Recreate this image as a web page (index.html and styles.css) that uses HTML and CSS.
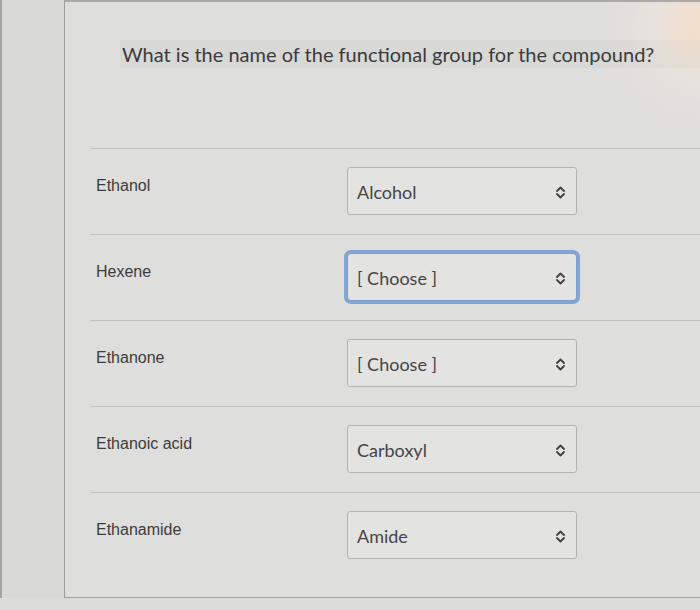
FILE: index.html
```html
<!DOCTYPE html>
<html lang="en">
<head>
<meta charset="utf-8">
<title>Functional groups</title>
<link rel="stylesheet" href="styles.css">
</head>
<body>
<div class="screen">
  <div class="gutter"></div>
  <main class="panel">
    <h1 class="question">What is the name of the functional group for the compound?</h1>
    <div class="answers">
      <div class="row">
        <div class="label">Ethanol</div>
        <div class="select"><span>Alcohol</span><svg class="chev" viewBox="0 0 9 13" width="9" height="13"><polyline points="1,5 4.5,1.5 8,5"/><polyline points="1,8 4.5,11.5 8,8"/></svg></div>
      </div>
      <div class="row">
        <div class="label">Hexene</div>
        <div class="select focused"><span>[ Choose ]</span><svg class="chev" viewBox="0 0 9 13" width="9" height="13"><polyline points="1,5 4.5,1.5 8,5"/><polyline points="1,8 4.5,11.5 8,8"/></svg></div>
      </div>
      <div class="row">
        <div class="label">Ethanone</div>
        <div class="select"><span>[ Choose ]</span><svg class="chev" viewBox="0 0 9 13" width="9" height="13"><polyline points="1,5 4.5,1.5 8,5"/><polyline points="1,8 4.5,11.5 8,8"/></svg></div>
      </div>
      <div class="row">
        <div class="label">Ethanoic acid</div>
        <div class="select"><span>Carboxyl</span><svg class="chev" viewBox="0 0 9 13" width="9" height="13"><polyline points="1,5 4.5,1.5 8,5"/><polyline points="1,8 4.5,11.5 8,8"/></svg></div>
      </div>
      <div class="row">
        <div class="label">Ethanamide</div>
        <div class="select"><span>Amide</span><svg class="chev" viewBox="0 0 9 13" width="9" height="13"><polyline points="1,5 4.5,1.5 8,5"/><polyline points="1,8 4.5,11.5 8,8"/></svg></div>
      </div>
    </div>
  </main>
</div>
</body>
</html>
```

FILE: styles.css
```css
html, body {
  margin: 0;
  padding: 0;
}
body {
  width: 700px;
  height: 610px;
  overflow: hidden;
  background: #dcdcda;
  font-family: Lato, "Open Sans", sans-serif;
}
.screen {
  display: flex;
  height: 598px;
}
.gutter {
  width: 62px;
  flex: none;
  border-left: 2px solid #a4a4a4;
  background: #d9d9d7;
}
.panel {
  flex: 1;
  border-left: 1px solid #9c9c9c;
  border-top: 2px solid #a9a9a9;
  border-bottom: 1px solid #9f9f9f;
  background:
    radial-gradient(circle at 640px 25px, rgba(255, 222, 190, 0.7) 0, rgba(255, 236, 220, 0.3) 50px, rgba(255, 255, 255, 0) 110px),
    #dededc;
}
.question {
  margin: 38px 0 0 55px;
  padding: 1px 0 1px 2px;
  height: 26px;
  background: rgba(0, 0, 0, 0.025);
  font-weight: 400;
  font-size: 20px;
  line-height: 26px;
  color: #3b3b3b;
  white-space: nowrap;
}
.answers {
  margin: 80px 0 0 25px;
}
.row {
  border-top: 1px solid #c3c3c1;
  height: 67px;
  padding-top: 18px;
  display: grid;
  grid-template-columns: 257px 230px;
  align-items: start;
}
.label {
  padding: 10px 0 0 6px;
  font-family: "Liberation Sans", Arial, sans-serif;
  font-size: 16px;
  line-height: 18px;
  color: #3c3c3c;
}
.select {
  box-sizing: border-box;
  height: 48px;
  border: 1px solid #b3b3b1;
  border-radius: 3px;
  background: #e3e3e1;
  display: flex;
  align-items: center;
  justify-content: space-between;
  padding: 2px 11px 0 9px;
  font-size: 18px;
  color: #454545;
}
.select.focused {
  border: 1px solid #7d9fcf;
  box-shadow: 0 0 0 3px #83a5d4;
  border-radius: 4px;
}
.chev {
  fill: none;
  stroke: #404040;
  stroke-width: 1.8;
  stroke-linecap: round;
  stroke-linejoin: round;
}
```
